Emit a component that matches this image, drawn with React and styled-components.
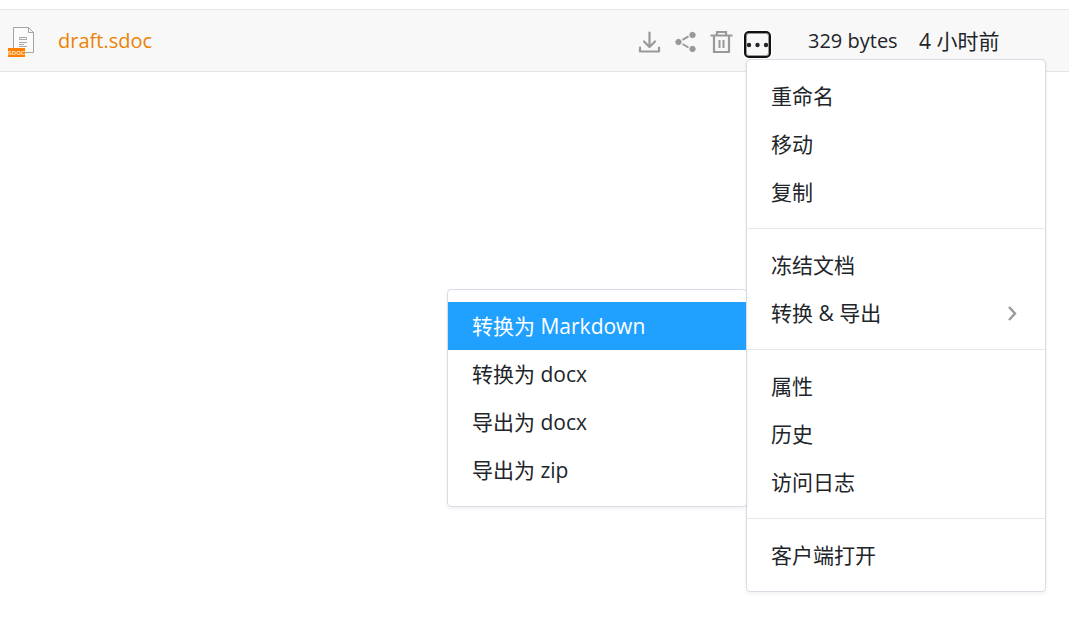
import React from 'react';
import styled, { createGlobalStyle, css } from 'styled-components';

const Global = createGlobalStyle`
  * { box-sizing: border-box; }
  body {
    margin: 0;
    background: #fff;
    color: #212529;
    font: 21px/32px "Open Sans", "Noto Sans CJK SC", sans-serif;
  }
  button { font: inherit; color: inherit; }
`;

const Page = styled.main`
  min-height: 100vh;
  padding-top: 9px;
`;

const FileRow = styled.div`
  display: flex;
  align-items: center;
  height: 63px;
  padding-left: 8px;
  background: #f8f8f8;
  border: solid #e6e6e9;
  border-width: 1px 0;
  font-size: 20px;
`;

const FileIcon = styled.svg`
  flex: none;
  width: 28px;
  height: 32px;
`;

const FileLink = styled.a`
  flex: 1;
  margin-left: 22px;
  color: #eb8205;
  text-decoration: none;
`;

const Tools = styled.div`
  display: flex;
  align-items: flex-start;
  gap: 12px;
  padding-top: 5px;
  margin-right: 38px;
`;

const ToolButton = styled.button`
  display: block;
  width: 24px;
  height: 24px;
  padding: 0;
  border: 0;
  border-radius: 3px;
  background: none;
  color: #999;
  svg { display: block; width: 24px; height: 24px; }
  ${(p) => p.$focused && css`
    width: 23px;
    height: 23px;
    color: #212529;
    outline: 2px solid #101010;
    box-shadow: inset 0 0 0 1px #55555599, 0 0 0 3px #fff;
    svg { width: 23px; height: 23px; }
  `}
`;

const MenuAnchor = styled.div`
  position: relative;
  width: 24px;
  padding-top: 3px;
`;

const Size = styled.span`
  flex: none;
  width: 111px;
`;

const Time = styled.span`
  flex: none;
  width: 150px;
  font-size: 21px;
`;

const MenuList = styled.ul`
  position: absolute;
  z-index: 1;
  top: ${(p) => (p.$sub ? '0' : '100%')};
  ${(p) => (p.$sub ? 'right: 100%;' : 'left: 0;')}
  width: 300px;
  margin: ${(p) => (p.$sub ? '0' : '3px 0 0')};
  padding: 12px 0;
  list-style: none;
  background: #fff;
  border: 1px solid #d9dce4;
  border-radius: 4px;
  box-shadow: 0 2px 4px rgba(0, 0, 0, 0.06);
  font-size: 21px;
`;

const MenuEntry = styled.li`
  position: relative;
`;

const MenuButton = styled.button`
  display: flex;
  align-items: center;
  justify-content: space-between;
  width: 100%;
  height: 48px;
  padding: 0 24px;
  border: 0;
  text-align: left;
  background: ${(p) => (p.$active ? '#20a0ff' : 'transparent')};
  color: ${(p) => (p.$active ? '#fff' : '#212529')};
`;

const Divider = styled.li`
  height: 1px;
  margin: 12px 0;
  background: #e6e8ed;
`;

const Chevron = styled.svg`
  width: 18px;
  height: 18px;
`;

const groups = [
  ['重命名', '移动', '复制'],
  ['冻结文档', '转换 & 导出'],
  ['属性', '历史', '访问日志'],
  ['客户端打开'],
];
const conversions = ['转换为 Markdown', '转换为 docx', '导出为 docx', '导出为 zip'];

function ConvertMenu() {
  return (
    <MenuList $sub aria-label="转换 & 导出">
      {conversions.map((label, i) => (
        <MenuEntry key={label}>
          <MenuButton type="button" $active={i === 0}>{label}</MenuButton>
        </MenuEntry>
      ))}
    </MenuList>
  );
}

function FileMenu() {
  return (
    <MenuList aria-label="更多操作">
      {groups.map((items, g) => (
        <React.Fragment key={items[0]}>
          {g > 0 && <Divider role="separator" />}
          {items.map((label) => {
            const hasSub = label === '转换 & 导出';
            return (
              <MenuEntry key={label}>
                <MenuButton type="button" aria-expanded={hasSub || undefined}>
                  {label}
                  {hasSub && (
                    <Chevron viewBox="0 0 18 18" fill="none" stroke="#999" strokeWidth="2.4">
                      <path d="M6 3l6 6.500-6 6.500" />
                    </Chevron>
                  )}
                </MenuButton>
                {hasSub && <ConvertMenu />}
              </MenuEntry>
            );
          })}
        </React.Fragment>
      ))}
    </MenuList>
  );
}

function SdocIcon() {
  return (
    <FileIcon viewBox="0 0 28 32" aria-hidden="true">
      <path d="M5.5 2.5h15l5 5v20h-20z" fill="#fbfbfb" stroke="#a3a3a3" />
      <path d="M20.5 2.5v5h5" fill="none" stroke="#a3a3a3" />
      <path d="M11.5 12.5h7v2h-7zM11 17.5h8M11 19.5h5M11 21.5h8" fill="none" stroke="#a8a8a8" />
      <path d="M0 23h17v9H0z" fill="#ff8000" />
      <text x="8.5" y="30" textAnchor="middle" fontSize="6" fontWeight="700" fill="#ffe6cc" fontFamily="Liberation Sans, sans-serif">SDOC</text>
    </FileIcon>
  );
}

export default function App() {
  return (
    <>
      <Global />
      <Page>
        <FileRow>
          <SdocIcon />
          <FileLink href="#draft">draft.sdoc</FileLink>
          <Tools>
            <ToolButton type="button" aria-label="下载">
              <svg viewBox="0 0 24 24" fill="none" stroke="currentColor" strokeWidth="2.2" strokeLinecap="round" strokeLinejoin="round">
                <path d="M11.5 2.5v14M6 11.5l5.5 5.5 5.5-5.5M2 17.5v4h19v-4" />
              </svg>
            </ToolButton>
            <ToolButton type="button" aria-label="分享">
              <svg viewBox="0 0 24 24" fill="currentColor" stroke="currentColor">
                <path d="M8.5 9.8l6-3.5M8.5 14l6 3.5" strokeWidth="2" />
                <circle cx="4.5" cy="12" r="2.7" />
                <circle cx="18.5" cy="5" r="2.7" />
                <circle cx="18.5" cy="19" r="2.7" />
              </svg>
            </ToolButton>
            <ToolButton type="button" aria-label="删除">
              <svg viewBox="0 0 24 24" fill="none" stroke="currentColor" strokeWidth="2.2">
                <path d="M0.5 5.5h22M7 5V2h9v3M4 5.5V22h15V5.5" />
                <path d="M9.5 10v8M13.5 10v8" strokeWidth="2" />
              </svg>
            </ToolButton>
            <MenuAnchor>
              <ToolButton type="button" aria-label="更多操作" aria-expanded="true" $focused>
                <svg viewBox="0 0 23 23" fill="currentColor">
                  <circle cx="3" cy="12" r="2.2" />
                  <circle cx="11.5" cy="12" r="2.2" />
                  <circle cx="20" cy="12" r="2.2" />
                </svg>
              </ToolButton>
              <FileMenu />
            </MenuAnchor>
          </Tools>
          <Size>329 bytes</Size>
          <Time>4 小时前</Time>
        </FileRow>
      </Page>
    </>
  );
}
